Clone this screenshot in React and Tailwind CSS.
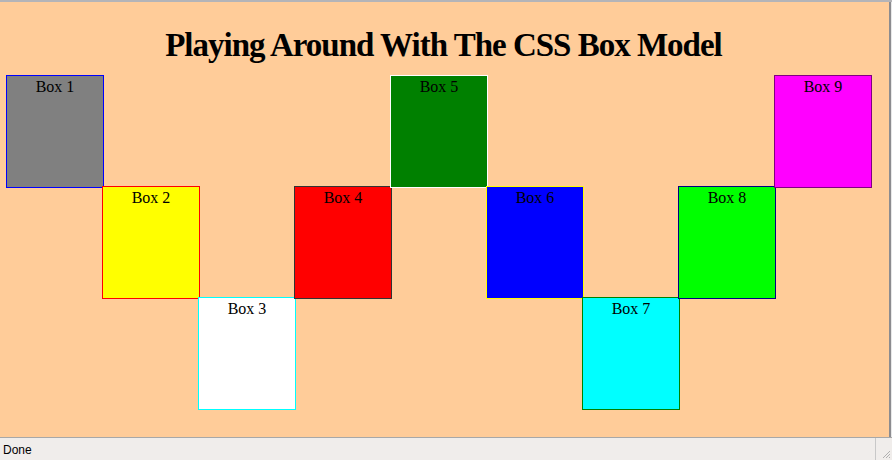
const boxes = [
  { label: 'Box 1', row: 'mt-0', cls: 'bg-[#808080] border-[#0000ff]' },
  { label: 'Box 2', row: 'mt-[111px]', cls: 'bg-[#ffff00] border-[#ff0000]' },
  { label: 'Box 3', row: 'mt-[222px]', cls: 'bg-white border-[#00ffff]' },
  { label: 'Box 4', row: 'mt-[111px]', cls: 'bg-[#ff0000] border-[#333333]' },
  { label: 'Box 5', row: 'mt-0', cls: 'bg-[#008000] border-white' },
  { label: 'Box 6', row: 'mt-[111px]', cls: 'bg-[#0000ff] border-[#ffff00]' },
  { label: 'Box 7', row: 'mt-[222px]', cls: 'bg-[#00ffff] border-[#008000]' },
  { label: 'Box 8', row: 'mt-[111px]', cls: 'bg-[#00ff00] border-[#000080]' },
  { label: 'Box 9', row: 'mt-0', cls: 'bg-[#ff00ff] border-[#800080]' },
];

function Box({ label, row, cls, first }) {
  return (
    <div
      className={`${row} ${first ? '' : '-ml-[2px]'} w-[98px] h-[113px] shrink-0 border pt-[2px] text-center text-[16px] leading-[18px] text-black ${cls}`}
    >
      {label}
    </div>
  );
}

export default function App() {
  return (
    <div className="w-[892px] h-[460px] flex flex-col overflow-hidden bg-white">
      <div className="h-[2px] bg-[#b4b4b8]" />
      <div className="flex-1 flex">
        <div
          className="flex-1 bg-[#ffcc99] flex flex-col"
          style={{ fontFamily: '"Liberation Serif", "Times New Roman", serif' }}
        >
          <h1 className="mt-[25px] text-center text-[33px] leading-[37px] tracking-[-1px] font-bold text-black pr-[2px]">
            Playing Around With The CSS Box Model
          </h1>
          <div className="mt-[11px] pl-[6px] flex items-start">
            {boxes.map((b, i) => (
              <Box key={i} {...b} first={i === 0} />
            ))}
          </div>
        </div>
        <div className="w-[2px] bg-[#8c8c90]" />
        <div className="w-[1px] bg-[#e8e8e8]" />
      </div>
      <div
        className="h-[23px] shrink-0 border-t border-[#a8a8a8] bg-[#f0edeb] flex items-center text-[12px] text-black"
        style={{ fontFamily: '"Liberation Sans", Arial, sans-serif' }}
      >
        <div className="flex-1 pl-[3px] pt-[1px]">Done</div>
        <div className="w-[1px] self-stretch bg-[#c8c8c8]" />
        <div className="w-[16px] self-stretch flex items-end justify-end pb-[1px] pr-[1px]">
          <svg width="10" height="10" viewBox="0 0 10 10">
            <path d="M9 2 L2 9 M9 5 L5 9 M9 8 L8 9" stroke="#b0b0b0" strokeWidth="1" />
          </svg>
        </div>
      </div>
    </div>
  );
}
